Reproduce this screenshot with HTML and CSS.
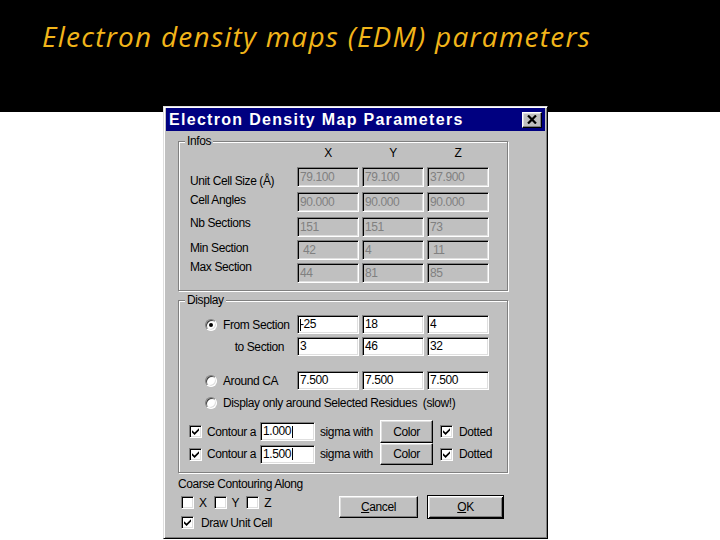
FILE: index.html
```html
<!DOCTYPE html>
<html>
<head>
<meta charset="utf-8">
<link rel="stylesheet" href="styles.css">
</head>
<body>
<div class="header">
  <h1 class="slide-title">Electron density maps (EDM) parameters</h1>
</div>
<div class="dialog">
  <div class="titlebar">
    <span class="title-text">Electron Density Map Parameters</span>
    <span class="close-btn"><svg width="10" height="9" viewBox="0 0 10 9"><path d="M1 0.5 L9 8.5 M9 0.5 L1 8.5" stroke="#000" stroke-width="2.2" fill="none"/></svg></span>
  </div>
  <div class="body">
    <div class="group infos">
      <span class="legend">Infos</span>
      <div class="inforow head"><span></span><span class="colh">X</span><span class="colh">Y</span><span class="colh">Z</span></div>
      <div class="inforow first"><span class="lbl off7">Unit Cell Size (Å)</span><span class="field dis">79.100</span><span class="field dis">79.100</span><span class="field dis">37.900</span></div>
      <div class="inforow"><span class="lbl off1">Cell Angles</span><span class="field dis">90.000</span><span class="field dis">90.000</span><span class="field dis">90.000</span></div>
      <div class="inforow"><span class="lbl offm1">Nb Sections</span><span class="field dis">151</span><span class="field dis">151</span><span class="field dis">73</span></div>
      <div class="inforow tight"><span class="lbl off1">Min Section</span><span class="field dis"> 42</span><span class="field dis">4</span><span class="field dis"> 11</span></div>
      <div class="inforow tight"><span class="lbl offm3">Max Section</span><span class="field dis">44</span><span class="field dis">81</span><span class="field dis">85</span></div>
    </div>
    <div class="group display">
      <span class="legend">Display</span>
      <div class="drow">
        <span class="opt"><span class="radio on"></span>From Section</span>
        <span class="field"><span class="caret lead"></span>-25</span><span class="field">18</span><span class="field">4</span>
      </div>
      <div class="drow row-b">
        <span class="to-lbl">to Section</span>
        <span class="field">3</span><span class="field">46</span><span class="field">32</span>
      </div>
      <div class="drow row-c">
        <span class="opt"><span class="radio"></span>Around CA</span>
        <span class="field">7.500</span><span class="field">7.500</span><span class="field">7.500</span>
      </div>
      <div class="drow-wide">
        <span class="opt"><span class="radio"></span>Display only around Selected Residues&nbsp; (slow!)</span>
      </div>
      <div class="crow first">
        <span class="check on"><svg width="7" height="7" viewBox="0 0 7 7"><path d="M0 2.2 L2.6 4.6 L7 0.2 L7 2.6 L2.6 7 L0 4.6 Z" fill="#000"/></svg></span>
        <span class="clbl">Contour a</span>
        <span class="field cfield">1.000<span class="caret"></span></span>
        <span class="sigma">sigma with</span>
        <span class="btn colorbtn">Color</span>
        <span class="check on dot-check"><svg width="7" height="7" viewBox="0 0 7 7"><path d="M0 2.2 L2.6 4.6 L7 0.2 L7 2.6 L2.6 7 L0 4.6 Z" fill="#000"/></svg></span>
        <span class="dot-lbl">Dotted</span>
      </div>
      <div class="crow second">
        <span class="check on"><svg width="7" height="7" viewBox="0 0 7 7"><path d="M0 2.2 L2.6 4.6 L7 0.2 L7 2.6 L2.6 7 L0 4.6 Z" fill="#000"/></svg></span>
        <span class="clbl">Contour a</span>
        <span class="field cfield">1.500<span class="caret"></span></span>
        <span class="sigma">sigma with</span>
        <span class="btn colorbtn">Color</span>
        <span class="check on dot-check"><svg width="7" height="7" viewBox="0 0 7 7"><path d="M0 2.2 L2.6 4.6 L7 0.2 L7 2.6 L2.6 7 L0 4.6 Z" fill="#000"/></svg></span>
        <span class="dot-lbl">Dotted</span>
      </div>
    </div>
    <div class="bottom">
      <div class="left">
        <div class="coarse">Coarse Contouring Along</div>
        <div class="coarse-row">
          <span class="check"></span><span class="axis">X</span>
          <span class="check"></span><span class="axis">Y</span>
          <span class="check"></span><span class="axis">Z</span>
        </div>
        <div class="draw-row">
          <span class="check on"><svg width="7" height="7" viewBox="0 0 7 7"><path d="M0 2.2 L2.6 4.6 L7 0.2 L7 2.6 L2.6 7 L0 4.6 Z" fill="#000"/></svg></span>
          <span>Draw Unit Cell</span>
        </div>
      </div>
      <div class="buttons">
        <span class="btn cancel"><span><u>C</u>ancel</span></span>
        <span class="btn ok"><span><u>O</u>K</span></span>
      </div>
    </div>
  </div>
</div>
</body>
</html>
```
FILE: styles.css
```css
body {
  margin: 0;
  background: #fff;
  font-family: "Liberation Sans", Arial, sans-serif;
}

.header {
  height: 112px;
  box-sizing: border-box;
  background: #000;
  padding: 18px 0 0 42px;
}

.slide-title {
  margin: 0;
  font-family: "Open Sans", Lato, sans-serif;
  font-style: italic;
  font-weight: 400;
  font-size: 28px;
  line-height: 36px;
  letter-spacing: 1.25px;
  color: #f2b51a;
  white-space: nowrap;
}

.dialog {
  width: 385px;
  height: 433px;
  box-sizing: border-box;
  margin: -6px 0 0 163px;
  background: #c0c0c0;
  border: 1px solid;
  border-color: #dfdfdf #000 #000 #dfdfdf;
  box-shadow: inset 1px 1px #fff, inset -1px -1px #808080;
  padding: 1px 2px 2px;
  font-size: 12px;
  line-height: 14px;
  letter-spacing: -0.4px;
  color: #000;
}

.titlebar {
  height: 23px;
  background: #000080;
  color: #fff;
  display: flex;
  align-items: center;
  justify-content: space-between;
  padding: 0 3px;
}

.title-text {
  font-weight: bold;
  font-size: 16px;
  letter-spacing: 1.3px;
  white-space: nowrap;
}

.close-btn {
  width: 20px;
  height: 16px;
  box-sizing: border-box;
  background: #c0c0c0;
  border: 1px solid;
  border-color: #fff #000 #000 #fff;
  box-shadow: inset -1px -1px #808080, inset 1px 1px #dfdfdf;
  display: flex;
  align-items: center;
  justify-content: center;
}

.close-btn svg { display: block; }

.body {
  padding: 10px 0 0 12px;
}

.group {
  position: relative;
  width: 330px;
  box-sizing: border-box;
  border: 1px solid #808080;
  box-shadow: inset 1px 1px #fff, 1px 1px #fff;
  padding-left: 11px;
}

.legend {
  position: absolute;
  top: -8px;
  left: 6px;
  padding: 0 2px;
  background: #c0c0c0;
}

.infos {
  height: 150px;
  padding-top: 4px;
}

.inforow {
  display: grid;
  grid-template-columns: 104px 62px 62px 62px;
  column-gap: 3px;
  height: 20px;
  margin-top: 5px;
}

.inforow.head { height: 14px; margin-top: 0; }
.inforow.first { margin-top: 7px; }
.inforow.tight { margin-top: 3px; }

.colh { text-align: center; }

.lbl { align-self: start; white-space: nowrap; }
.off7 { margin-top: 7px; }
.off1 { margin-top: 1px; }
.offm1 { margin-top: -1px; }
.offm3 { margin-top: -3px; }

.field {
  box-sizing: border-box;
  height: 20px;
  border: 1px solid;
  border-color: #808080 #fff #fff #808080;
  box-shadow: inset 1px 1px #000, inset -1px -1px #dfdfdf;
  background: #fff;
  padding: 0 1px 0 2px;
  line-height: 17px;
  white-space: pre;
  overflow: hidden;
  display: flex;
  align-items: center;
}

.field.dis {
  background: #c0c0c0;
  color: #808080;
}

.caret {
  display: inline-block;
  width: 1px;
  height: 12px;
  background: #000;
  margin-left: 1px;
}

.caret.lead { margin: 0 -1px 0 0; }

.display {
  margin-top: 9px;
  padding-top: 14px;
  padding-bottom: 7px;
}

.drow {
  display: grid;
  grid-template-columns: 104px 62px 62px 62px;
  column-gap: 3px;
  height: 19px;
  align-items: center;
}

.drow .field { height: 19px; }
.drow.row-b { margin-top: 3px; }
.drow.row-c { margin-top: 15px; }

.drow-wide {
  display: flex;
  align-items: center;
  height: 16px;
  margin-top: 5px;
}

.opt {
  display: flex;
  align-items: center;
  gap: 6px;
  padding-left: 15px;
  white-space: nowrap;
}

.to-lbl {
  text-align: right;
  padding-right: 10px;
}

.radio {
  flex: none;
  width: 12px;
  height: 12px;
  box-sizing: border-box;
  border-radius: 50%;
  background: #fff;
  border: 1px solid;
  border-color: #808080 #fff #fff #808080;
  box-shadow: inset 1px 1px #404040, inset -1px -1px #dfdfdf;
  display: flex;
  align-items: center;
  justify-content: center;
}

.radio.on::after {
  content: "";
  width: 4px;
  height: 4px;
  border-radius: 50%;
  background: #000;
}

.check {
  flex: none;
  width: 13px;
  height: 13px;
  box-sizing: border-box;
  background: #fff;
  border: 1px solid;
  border-color: #808080 #fff #fff #808080;
  box-shadow: inset 1px 1px #000, inset -1px -1px #dfdfdf;
  display: flex;
  align-items: center;
  justify-content: center;
}

.check svg { display: block; }

.crow {
  display: flex;
  align-items: center;
  margin-left: -1px;
  height: 23px;
}

.crow.first { margin-top: 9px; }
.crow.second { height: 22px; }

.clbl { width: 53px; margin-left: 5px; box-sizing: border-box; white-space: nowrap; }

.cfield { width: 55px; height: 19px; flex: none; }

.sigma { width: 60px; margin-left: 5px; white-space: nowrap; }

.btn {
  box-sizing: border-box;
  background: #c0c0c0;
  border: 1px solid;
  border-color: #fff #000 #000 #fff;
  box-shadow: inset -1px -1px #808080, inset 1px 1px #dfdfdf;
  display: flex;
  align-items: center;
  justify-content: center;
  flex: none;
}

.colorbtn { width: 53px; height: 23px; }
.crow.second .colorbtn { height: 22px; }

.dot-check { margin-left: 7px; }
.dot-lbl { margin-left: 6px; }

.bottom {
  display: flex;
  margin-top: 4px;
}

.left { width: 161px; }

.coarse { white-space: nowrap; }

.coarse-row {
  display: flex;
  align-items: center;
  height: 13px;
  margin-top: 5px;
  padding-left: 3px;
}

.coarse-row .axis { margin: 0 7px 0 5px; color: #000; }

.draw-row {
  display: flex;
  align-items: center;
  gap: 7px;
  height: 13px;
  margin-top: 7px;
  padding-left: 3px;
}

.buttons {
  display: flex;
  align-items: center;
  gap: 9px;
  height: 24px;
  margin-top: 18px;
}

.cancel { width: 79px; height: 22px; }

.ok {
  width: 77px;
  height: 24px;
  border: 1px solid #000;
  box-shadow: inset 1px 1px #fff, inset -1px -1px #000, inset 2px 2px #dfdfdf, inset -2px -2px #808080;
}
```
